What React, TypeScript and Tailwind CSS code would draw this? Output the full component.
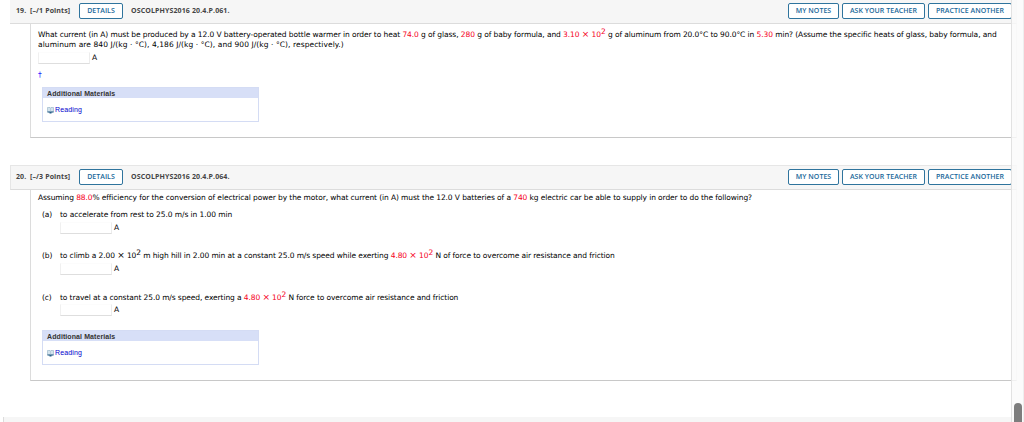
import React from "react";

interface IQuestion {
  number: string;
  points: string;
  code: string;
  first?: boolean;
  children: React.ReactNode;
}

const Red = ({ children }: { children: React.ReactNode }) => (
  <span className="text-[#f5001d]">{children}</span>
);

const Sup = () => <span className="align-[3px] text-[7.5px] leading-0">2</span>;

const Times = () => <span className="text-[9px] leading-0">×</span>;

const Button = ({ label, className }: { label: string; className: string }) => (
  <button
    className={`h-4 shrink-0 rounded-[2px] border border-[#2f749d] bg-white text-center text-[7px] leading-[14px] font-semibold tracking-[0.04px] whitespace-nowrap text-[#20689a] ${className}`}
  >
    {label}
  </button>
);

const Answer = ({ className }: { className?: string }) => (
  <div className={`flex h-3 items-center ${className ?? ""}`}>
    <div className="h-3 w-[52px] border border-t-[#fcfcfc] border-r-[#ececec] border-b-[#dedede] border-l-[#f0f0f0]" />
    <span className="ml-[2px]">A</span>
  </div>
);

const BookIcon = () => (
  <svg className="h-[7px] w-[7px]" viewBox="0 0 14 14">
    <path d="M1 1h5l1 1 1-1h5v9H1z" fill="#d3e3ed" stroke="#7fa3ba" />
    <path d="M1 9h12v2H9v2H5v-2H1z" fill="#285f88" />
    <path d="M7 2v7" stroke="#9bb8ca" />
  </svg>
);

const Materials = ({ className }: { className: string }) => (
  <div
    className={`ml-[4px] h-[35px] w-[217px] border border-[#d4dcf4] font-['Liberation_Sans',sans-serif] text-[7px] ${className}`}
  >
    <div className="h-[10px] bg-[#d7dff7] pl-[4px] leading-[11px] font-bold tracking-[0.09px] text-[#333]">
      Additional Materials
    </div>
    <a className="mt-[8px] flex h-2 items-center gap-px pl-[4px] leading-[8px] tracking-[0.13px] text-[#0000cc]">
      <BookIcon />
      Reading
    </a>
  </div>
);

const Question = ({ number, points, code, first, children }: IQuestion) => (
  <section className="ml-[10px] w-[1007px]">
    <header
      className={`flex items-start border-r border-b border-[#dcdcdc] border-r-[#eee] bg-[#f6f6f6] pt-[3px] font-['Open_Sans',sans-serif] ${
        first ? "h-6" : "h-[25px] border-t border-t-[#e6e6e6] border-l border-l-[#e6e6e6]"
      }`}
    >
      <div
        className={`flex h-4 items-center text-[7px] font-bold tracking-[0.12px] whitespace-nowrap text-[#444] ${
          first ? "w-[69px] pl-[6px]" : "w-[68px] pl-[5px]"
        }`}
      >
        <span className="w-[14px]">{number}.</span>
        <span>{points}</span>
      </div>
      <Button label="DETAILS" className="w-[44px]" />
      <span className="ml-[8px] text-[7px] leading-4 font-bold tracking-[0.12px] whitespace-nowrap text-[#444]">
        {code}
      </span>
      <div className="mr-[4px] ml-auto flex gap-[3px]">
        <Button label="MY NOTES" className="w-[51px]" />
        <Button label="ASK YOUR TEACHER" className="w-[83px]" />
        <Button label="PRACTICE ANOTHER" className="w-[84px]" />
      </div>
    </header>
    <div
      className={`ml-[20px] border-r border-b border-l border-r-[#eee] border-b-[#c8c8c8] border-l-[#dcdcdc] pl-[7px] ${
        first ? "h-[114px]" : "h-[191px]"
      }`}
    >
      {children}
    </div>
  </section>
);

const App = () => {
  return (
    <main className="relative h-[422px] w-[1024px] overflow-hidden bg-white font-['DejaVu_Sans',sans-serif] text-[7.5px] leading-[10px] whitespace-nowrap text-black">
      <Question number="19" points="[–/1 Points]" code="OSCOLPHYS2016 20.4.P.061." first>
        <p className="h-[15px] pt-[6px] tracking-[-0.085px]">
          What current (in A) must be produced by a 12.0 V battery-operated bottle warmer in order
          to heat <Red>74.0</Red> g of glass, <Red>280</Red> g of baby formula, and{" "}
          <Red>
            3.10 <Times /> 10
            <Sup />
          </Red>{" "}
          g of aluminum from 20.0°C to 90.0°C in <Red>5.30</Red> min? (Assume the specific heats of
          glass, baby formula, and
        </p>
        <p className="h-[13px] pt-px tracking-[0.07px]">
          aluminum are 840 J/(kg · °C), 4,186 J/(kg · °C), and 900 J/(kg · °C), respectively.)
        </p>
        <Answer />
        <p className="mt-[6px] h-[10px] text-[#2222ff]">†</p>
        <Materials className="mt-[7px]" />
      </Question>
      <div className="h-[27px]" />
      <Question number="20" points="[–/3 Points]" code="OSCOLPHYS2016 20.4.P.064.">
        <p className="h-[19px] pt-[3px] tracking-[-0.097px]">
          Assuming <Red>88.0</Red>% efficiency for the conversion of electrical power by the motor,
          what current (in A) must the 12.0 V batteries of a <Red>740</Red> kg electric car be able
          to supply in order to do the following?
        </p>
        <div className="flex h-[13px] pt-px pl-[4px] tracking-[-0.08px]">
          <span className="w-[18px]">(a)</span>
          <span>to accelerate from rest to 25.0 m/s in 1.00 min</span>
        </div>
        <Answer className="ml-[22px]" />
        <div className="mt-[16px] flex h-[13px] pt-px pl-[4px] tracking-[-0.098px]">
          <span className="w-[18px]">(b)</span>
          <span>
            to climb a 2.00 <Times /> 10
            <Sup /> m high hill in 2.00 min at a constant 25.0 m/s speed while exerting{" "}
            <Red>
              4.80 <Times /> 10
              <Sup />
            </Red>{" "}
            N of force to overcome air resistance and friction
          </span>
        </div>
        <Answer className="ml-[22px]" />
        <div className="mt-[16px] flex h-[13px] pt-[2px] pl-[4px] tracking-[-0.1px]">
          <span className="w-[18px]">(c)</span>
          <span>
            to travel at a constant 25.0 m/s speed, exerting a{" "}
            <Red>
              4.80 <Times /> 10
              <Sup />
            </Red>{" "}
            N force to overcome air resistance and friction
          </span>
        </div>
        <Answer className="ml-[22px]" />
        <Materials className="mt-[14px]" />
      </Question>
      <div className="mt-[36px] ml-[3px] h-[5px] border-l border-[#dcdcdc] bg-[#f6f6f6]" />
      {/* scrollbar */}
      <div className="absolute top-0 right-0 flex h-full w-[13px] items-end border-r border-l border-r-[#eee] border-l-[#e2e2e2] bg-[#fafafa]/80 pl-[2px]">
        <div className="h-[19px] w-2 rounded-t-full bg-[#7d7d7d]" />
      </div>
    </main>
  );
};

export default App;
